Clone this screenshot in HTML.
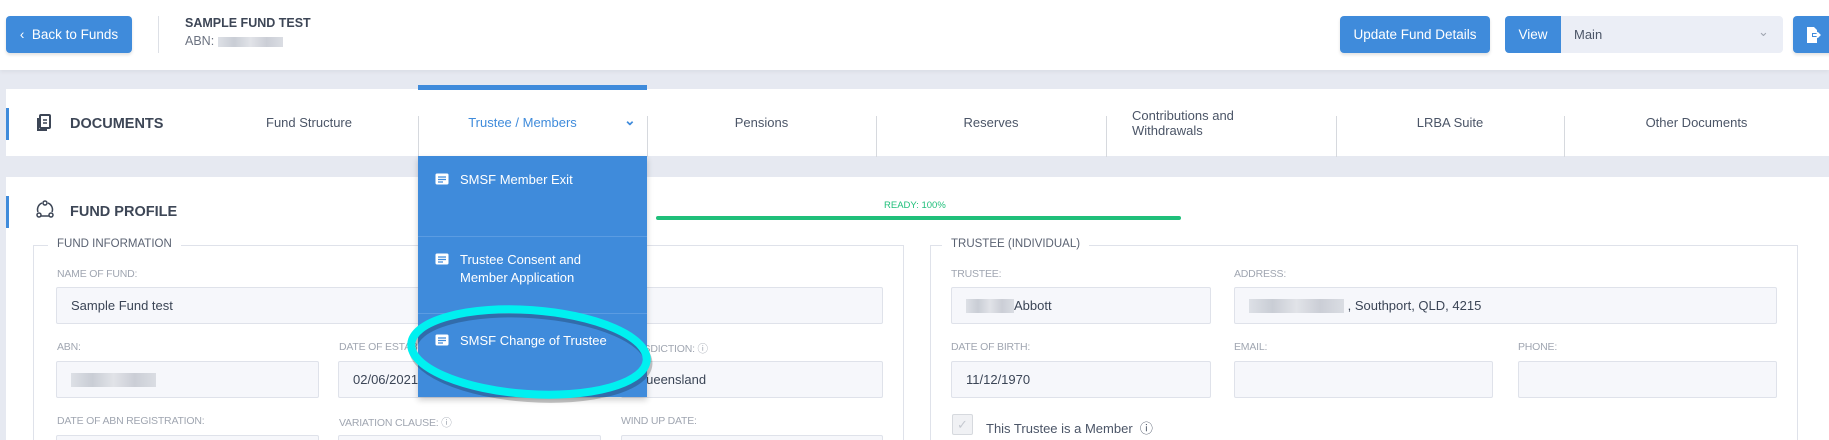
<!DOCTYPE html>
<html style="overflow:hidden"><head><meta charset="utf-8"><style>
*{box-sizing:border-box;margin:0;padding:0}
html,body{width:1829px;height:440px;overflow:hidden}
body{background:#e6e9f1;font-family:"Liberation Sans",sans-serif;color:#4a5568;position:relative}
#w{position:absolute;left:0;top:0;width:1829px;height:440px;overflow:hidden}
.a{position:absolute}
.btn{position:absolute;background:#3f8bdb;color:#fff;border-radius:4px;font-size:13.5px;display:flex;align-items:center;justify-content:center;box-shadow:0 2px 3px rgba(0,0,0,.12)}
.tab{position:absolute;top:89px;height:67px;display:flex;align-items:center;justify-content:center;font-size:13px;color:#4b5567;text-align:center}
.div{position:absolute;top:116px;width:1px;height:41px;background:#d6d9de}
.lbl{position:absolute;font-size:10.5px;color:#a0a6b1;letter-spacing:-.2px}
.inp{position:absolute;background:#f6f7fb;border:1px solid #dfe2ea;border-radius:2px;height:37px;font-size:13px;color:#3b4556;display:flex;align-items:center;padding-left:14px}
.blur{display:inline-block;height:14px;background:linear-gradient(90deg,#dde0e6,#c9cdd5,#e1e3e8,#cbced6,#dadde3);}
.dd{position:absolute;left:418px;width:229px;color:#fff;font-size:13px;padding-left:17px}
.dd svg{position:absolute;left:17px;top:2px}
.dd span{display:block;padding-left:25px;line-height:18px}
</style></head><body><div id="w">
<div class="a" style="left:0;top:0;width:1829px;height:70px;background:#fff;box-shadow:0 2px 4px rgba(0,0,0,.05)"></div>
<div class="btn" style="left:6px;top:16px;width:126px;height:37px">‹&nbsp; Back to Funds</div>
<div class="a" style="left:158px;top:16px;width:1px;height:37px;background:#dde0e6"></div>
<div class="a" style="left:185px;top:16px;font-size:12.5px;font-weight:bold;color:#3d4656">SAMPLE FUND TEST</div>
<div class="a" style="left:185px;top:34px;font-size:12.5px;color:#6b7280">ABN: <span class="blur" style="width:65px;height:10px;vertical-align:middle"></span></div>
<div class="btn" style="left:1340px;top:16px;width:150px;height:37px">Update Fund Details</div>
<div class="a" style="left:1505px;top:16px;width:278px;height:37px;background:#ebeef6;border-radius:4px"></div>
<div class="btn" style="left:1505px;top:16px;width:56px;height:37px;border-radius:4px 0 0 4px;box-shadow:none">View</div>
<div class="a" style="left:1574px;top:27px;font-size:13px;color:#4b5567">Main</div>
<div class="a" style="left:1758px;top:24px;font-size:13px;color:#a0a6b1">⌄</div>
<div class="btn" style="left:1793px;top:16px;width:40px;height:37px"><svg width="16" height="18" viewBox="0 0 16 18"><path d="M2 1h7l3 3v3H7v4h5v6H2z" fill="#fff"/><path d="M8 9h6M12 6.5l2.5 2.5L12 11.5" stroke="#fff" stroke-width="2" fill="none"/></svg></div>

<div class="a" style="left:6px;top:89px;width:1823px;height:67px;background:#fff"></div>
<div class="a" style="left:418px;top:85px;width:229px;height:5px;background:#3f8bdb"></div>
<div class="a" style="left:6px;top:108px;width:3px;height:32px;background:#3f8bdb"></div>
<svg class="a" style="left:36px;top:114px" width="16" height="18" viewBox="0 0 16 18"><rect x="4" y="1" width="10" height="13" rx="1" fill="none" stroke="#3d4656" stroke-width="2"/><path d="M2 4v12h9" fill="none" stroke="#3d4656" stroke-width="2"/><path d="M7 6h4M7 9h4" stroke="#3d4656" stroke-width="1.5"/></svg>
<div class="a" style="left:70px;top:116px;font-size:14.5px;font-weight:bold;color:#3d4656">DOCUMENTS</div>
<div class="tab" style="left:200px;width:218px">Fund Structure</div>
<div class="div" style="left:418px"></div>
<div class="tab" style="left:418px;width:229px;color:#3f8bdb;padding-right:20px">Trustee / Members</div>
<div class="a" style="left:624px;top:112px;color:#3f8bdb;font-size:14px;font-weight:bold">⌄</div>
<div class="div" style="left:647px"></div>
<div class="tab" style="left:647px;width:229px">Pensions</div>
<div class="div" style="left:876px"></div>
<div class="tab" style="left:876px;width:230px">Reserves</div>
<div class="div" style="left:1106px"></div>
<div class="tab" style="left:1106px;width:230px;justify-content:flex-start;padding-left:26px;text-align:left">Contributions and<br>Withdrawals</div>
<div class="div" style="left:1336px"></div>
<div class="tab" style="left:1336px;width:228px">LRBA Suite</div>
<div class="div" style="left:1564px"></div>
<div class="tab" style="left:1564px;width:265px">Other Documents</div>

<div class="a" style="left:6px;top:177px;width:1823px;height:263px;background:#fff"></div>
<div class="a" style="left:6px;top:196px;width:3px;height:32px;background:#3f8bdb"></div>
<svg class="a" style="left:36px;top:200px" width="18" height="18" viewBox="0 0 18 18" fill="none" stroke="#3d4656" stroke-width="1.5"><path d="M6 3a7 7 0 0 0-4 9M12 3a7 7 0 0 1 4 9M5 16h8"/><circle cx="9" cy="3" r="2"/><circle cx="3" cy="15" r="2"/><circle cx="15" cy="15" r="2"/></svg>
<div class="a" style="left:70px;top:204px;font-size:14.5px;font-weight:bold;color:#3d4656">FUND PROFILE</div>
<div class="a" style="left:884px;top:200px;font-size:9.5px;color:#1fbf7a">READY: 100%</div>
<div class="a" style="left:656px;top:216px;width:525px;height:4px;background:#1fbf7a;border-radius:2px"></div>

<div class="a" style="left:33px;top:245px;width:871px;height:200px;border:1px solid #dfe2ea"></div>
<div class="a" style="left:48px;top:238px;background:#fff;padding:0 9px;font-size:11.5px;color:#5a6272">FUND INFORMATION</div>
<div class="lbl" style="left:57px;top:268px">NAME OF FUND:</div>
<div class="inp" style="left:56px;top:287px;width:827px">Sample Fund test</div>
<div class="lbl" style="left:57px;top:341px">ABN:</div>
<div class="inp" style="left:56px;top:361px;width:263px"><span class="blur" style="width:85px"></span></div>
<div class="lbl" style="left:339px;top:341px">DATE OF ESTABLISHMENT:</div>
<div class="inp" style="left:338px;top:361px;width:263px">02/06/2021</div>
<div class="lbl" style="left:621px;top:341px">JURISDICTION: ⓘ</div>
<div class="inp" style="left:621px;top:361px;width:262px">Queensland</div>
<div class="lbl" style="left:57px;top:415px">DATE OF ABN REGISTRATION:</div>
<div class="inp" style="left:56px;top:435px;width:263px"></div>
<div class="lbl" style="left:339px;top:415px">VARIATION CLAUSE: ⓘ</div>
<div class="inp" style="left:338px;top:435px;width:263px"></div>
<div class="lbl" style="left:621px;top:415px">WIND UP DATE:</div>
<div class="inp" style="left:621px;top:435px;width:262px"></div>

<div class="a" style="left:930px;top:245px;width:868px;height:200px;border:1px solid #dfe2ea"></div>
<div class="a" style="left:942px;top:238px;background:#fff;padding:0 9px;font-size:11.5px;color:#5a6272">TRUSTEE (INDIVIDUAL)</div>
<div class="lbl" style="left:951px;top:268px">TRUSTEE:</div>
<div class="inp" style="left:951px;top:287px;width:260px"><span class="blur" style="width:48px"></span>Abbott</div>
<div class="lbl" style="left:1234px;top:268px">ADDRESS:</div>
<div class="inp" style="left:1234px;top:287px;width:543px"><span class="blur" style="width:95px"></span>&nbsp;, Southport, QLD, 4215</div>
<div class="lbl" style="left:951px;top:341px">DATE OF BIRTH:</div>
<div class="inp" style="left:951px;top:361px;width:260px">11/12/1970</div>
<div class="lbl" style="left:1234px;top:341px">EMAIL:</div>
<div class="inp" style="left:1234px;top:361px;width:259px"></div>
<div class="lbl" style="left:1518px;top:341px">PHONE:</div>
<div class="inp" style="left:1518px;top:361px;width:259px"></div>
<div class="a" style="left:952px;top:414px;width:21px;height:21px;border:1px solid #d6d9de;border-radius:2px;background:#f0f1f4;color:#c5c9d0;font-size:13px;text-align:center;line-height:19px">✓</div>
<div class="a" style="left:986px;top:418px;font-size:13px;color:#4b5567">This Trustee is a Member &nbsp;ⓘ</div>

<div class="a" style="left:418px;top:156px;width:229px;height:241px;background:#3f8bdb;box-shadow:0 3px 6px rgba(0,0,0,.2)"></div>
<div class="a" style="left:418px;top:236px;width:229px;height:1px;background:#5b9ce2"></div>
<div class="a" style="left:418px;top:313px;width:229px;height:1px;background:#5b9ce2"></div>
<svg width="0" height="0" style="position:absolute"><defs><symbol id="d" viewBox="0 0 14 12"><rect x="0.5" y="0.5" width="13" height="11" rx="1.5" fill="#fff"/><path d="M3 4h8M3 6.5h8M3 9h5" stroke="#3f8bdb" stroke-width="1.2"/></symbol></defs></svg>
<div class="dd" style="top:171px"><svg width="14" height="12"><use href="#d"/></svg><span>SMSF Member Exit</span></div>
<div class="dd" style="top:251px"><svg width="14" height="12"><use href="#d"/></svg><span>Trustee Consent and<br>Member Application</span></div>
<div class="dd" style="top:332px"><svg width="14" height="12"><use href="#d"/></svg><span>SMSF Change of Trustee</span></div>

<svg class="a" style="left:380px;top:290px" width="300" height="130"><g transform="rotate(4 149 62)"><ellipse cx="149" cy="62" rx="118" ry="42" fill="none" stroke="rgba(0,0,0,.22)" stroke-width="8" transform="translate(2,4)"/><ellipse cx="149" cy="62" rx="118" ry="42" fill="none" stroke="#00f0f0" stroke-width="8"/></g></svg>
</div></body></html>
